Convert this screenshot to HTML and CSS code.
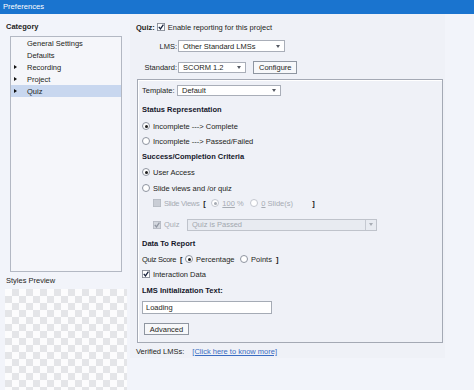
FILE: index.html
```html
<!DOCTYPE html>
<html lang="en">
<head>
    <meta charset="utf-8">
    <title>Preferences</title>
    <link rel="stylesheet" href="styles.css">
</head>

<body>

    <div class="titlebar">Preferences</div>

    <div class="main">
        <div class="side">
            <div class="side-title">Category</div>
            <ul class="tree">
                <li class="tree-item"><span class="arrow"></span>General Settings</li>
                <li class="tree-item"><span class="arrow"></span>Defaults</li>
                <li class="tree-item"><span class="arrow kids"></span>Recording</li>
                <li class="tree-item"><span class="arrow kids"></span>Project</li>
                <li class="tree-item selected"><span class="arrow kids"></span>Quiz</li>
            </ul>
            <div class="preview-title">Styles Preview</div>
            <div class="preview"></div>
        </div>

        <div class="panel">
            <div class="quiz-row">
                <b class="quiz-label">Quiz:</b>
                <svg class="cb" viewBox="0 0 9 9"><rect x=".5" y=".5" width="8" height="8" fill="#fff" stroke="#858b96"/><path d="M2 4.3l1.9 2.3L7.2 1.8" fill="none" stroke="#16213d" stroke-width="1.4"/></svg>
                Enable reporting for this project
            </div>

            <div class="field-row lms-row">
                <span class="field-label">LMS:</span>
                <div class="select lms-select">Other Standard LMSs</div>
            </div>

            <div class="field-row std-row">
                <span class="field-label">Standard:</span>
                <div class="select std-select">SCORM 1.2</div>
                <button class="btn configure">Configure</button>
            </div>

            <div class="group">
                <div class="row template-row">
                    <span class="template-label">Template:</span>
                    <div class="select template-select">Default</div>
                </div>

                <div class="row heading mt6">Status Representation</div>
                <div class="row mt5"><span class="radio on"></span>Incomplete ---&gt; Complete</div>
                <div class="row mt3"><span class="radio"></span>Incomplete ---&gt; Passed/Failed</div>

                <div class="row heading mt3">Success/Completion Criteria</div>
                <div class="row mt4"><span class="radio on"></span>User Access</div>
                <div class="row mt4"><span class="radio"></span>Slide views and /or quiz</div>

                <div class="row sub mt3">
                    <svg class="cb" viewBox="0 0 9 9"><rect x=".5" y=".5" width="8" height="8" fill="#c9cdd5" stroke="#b5bac3"/></svg>
                    <span class="dim slide-views">Slide Views</span>
                    <b class="bracket">[</b>
                    <span class="radio on dis"></span>
                    <span class="dim pct"><u>100</u> %</span>
                    <span class="radio dis"></span>
                    <span class="dim slides"><u>0</u> Slide(s)</span>
                    <b class="bracket">]</b>
                </div>

                <div class="row sub quiz-sub">
                    <svg class="cb" viewBox="0 0 9 9"><rect x=".5" y=".5" width="8" height="8" fill="#d3d7de" stroke="#b5bac3"/><path d="M2 4.3l1.9 2.3L7.2 1.8" fill="none" stroke="#9096a2" stroke-width="1.4"/></svg>
                    <span class="dim quiz-word">Quiz</span>
                    <div class="select disabled quiz-select">Quiz is Passed<span class="drop"></span></div>
                </div>

                <div class="row heading mt6">Data To Report</div>
                <div class="row mt4">
                    <span class="score-label">Quiz Score</span>
                    <b class="bracket">[</b>
                    <span class="radio on"></span>
                    <span class="pct-word">Percentage</span>
                    <span class="radio"></span>
                    <span class="points-word">Points</span>
                    <b class="bracket">]</b>
                </div>
                <div class="row mt3">
                    <svg class="cb" viewBox="0 0 9 9"><rect x=".5" y=".5" width="8" height="8" fill="#fff" stroke="#858b96"/><path d="M2 4.3l1.9 2.3L7.2 1.8" fill="none" stroke="#16213d" stroke-width="1.4"/></svg>
                    Interaction Data
                </div>

                <div class="row heading mt4">LMS Initialization Text:</div>
                <input class="init-text" value="Loading">
                <button class="btn advanced">Advanced</button>
            </div>

            <div class="verified">Verified LMSs:<a href="#" class="more">[Click here to know more]</a></div>
        </div>
    </div>

</body>
</html>
```

FILE: styles.css
```css
body {
    margin: 0;
    font-family: "Liberation Sans", Arial, sans-serif;
    font-size: 7.5px;
    color: #1e1e22;
    background-color: #f2f4fa;
    height: 390px;
    overflow: hidden;
}

.titlebar {
    height: 14px;
    line-height: 14px;
    padding-left: 3px;
    background-color: #1a74cf;
    color: #fff;
    font-size: 7.6px;
}

.main {
    display: flex;
}

/* left column */
.side {
    width: 130px;
    flex: none;
}

.side-title {
    margin-left: 6px;
    padding-top: 8px;
    line-height: 10px;
    font-weight: bold;
}

.tree {
    list-style: none;
    margin: 4px 0 0 10px;
    padding: 0;
    width: 110px;
    height: 234px;
    border: 1px solid #b3b8c3;
    background-color: #f5f6fa;
}

.tree-item {
    display: flex;
    align-items: center;
    height: 12px;
    padding-left: 3px;
}

.tree-item.selected {
    background-color: #c8d7ef;
}

.arrow {
    width: 13px;
    flex: none;
}

.arrow.kids::before {
    content: "";
    display: block;
    width: 0;
    height: 0;
    border-left: 3px solid #111;
    border-top: 2px solid transparent;
    border-bottom: 2px solid transparent;
}

.preview-title {
    margin: 4px 0 0 6px;
    line-height: 10px;
}

.preview {
    margin: 3px 0 0 5px;
    width: 122px;
    height: 101px;
    background: repeating-conic-gradient(#e4e5e8 0 25%, #fcfcfd 0 50%) 0 0 / 14px 14px;
}

/* right panel */
.panel {
    width: 315px;
    height: 344px;
    padding-left: 6px;
    box-sizing: border-box;
    background-color: #eff1f7;
}

.quiz-row {
    display: flex;
    align-items: center;
    margin-top: 8px;
    height: 10px;
    white-space: nowrap;
}

.quiz-label {
    margin-right: 2px;
}

.cb {
    width: 8px;
    height: 8px;
    margin-right: 3px;
    flex: none;
}

.field-row {
    display: flex;
    align-items: center;
}

.lms-row {
    margin-top: 8px;
    height: 12px;
}

.std-row {
    margin-top: 9px;
    height: 13px;
}

.field-label {
    width: 41px;
    text-align: right;
    margin-right: 1px;
}

.select {
    display: flex;
    align-items: center;
    height: 12px;
    box-sizing: border-box;
    border: 1px solid #a9aeb8;
    background-color: #fff;
    padding-left: 4px;
    white-space: nowrap;
}

.select::after {
    content: "";
    margin-left: auto;
    margin-right: 4px;
    border-top: 3px solid #555a63;
    border-left: 2px solid transparent;
    border-right: 2px solid transparent;
}

.lms-select {
    width: 107px;
}

.std-select {
    width: 68px;
    height: 11px;
}

.btn {
    height: 13px;
    padding: 0 5px;
    border: 1px solid #8f96a1;
    border-radius: 0;
    background-color: #f7f8fa;
    font: inherit;
    color: inherit;
}

.configure {
    margin-left: 7px;
    width: 44px;
}

/* group box */
.group {
    margin: 5px 0 0 1px;
    width: 306px;
    height: 264px;
    box-sizing: border-box;
    border: 1px solid #a4a9b4;
    box-shadow: inset 1px 1px 0 #fff;
    padding-left: 4px;
}

.row {
    display: flex;
    align-items: center;
    height: 12px;
    white-space: nowrap;
}

.row > span,
.row > b {
    flex: none;
}

.heading {
    font-weight: bold;
    color: #15172a;
}

.mt3 { margin-top: 3px; }
.mt4 { margin-top: 4px; }
.mt5 { margin-top: 5px; }
.mt6 { margin-top: 6px; }

.template-row {
    margin-top: 4px;
    height: 13px;
}

.template-label {
    width: 35px;
}

.template-select {
    width: 104px;
    height: 11px;
}

.radio {
    display: flex;
    align-items: center;
    justify-content: center;
    width: 8px;
    height: 8px;
    box-sizing: border-box;
    border: 1px solid #8e94a0;
    border-radius: 50%;
    background-color: #fff;
    margin-right: 3px;
}

.radio.on::after {
    content: "";
    width: 3px;
    height: 3px;
    border-radius: 50%;
    background-color: #1f1f1f;
}

.radio.dis {
    border-color: #c3c7cf;
}

.radio.dis::after {
    background-color: #a5aab2;
}

.sub {
    padding-left: 11px;
}

.dim {
    color: #a6abb3;
}

.bracket {
    width: 3px;
    color: #1c1c1c;
    margin-right: 5px;
}

.slide-views,
.score-label {
    letter-spacing: -0.3px;
    margin-right: 4px;
}

.score-label + .bracket {
    margin-right: 2px;
}

.pct {
    width: 28px;
}

.slides {
    width: 51px;
}

.quiz-sub {
    margin-top: 9px;
    height: 13px;
}

.quiz-word {
    width: 23px;
}

.select.disabled {
    width: 190px;
    background-color: #e8ebf1;
    border-color: #bfc3cb;
    color: #a2a7af;
    padding-right: 0;
}

.select.disabled::after {
    display: none;
}

.drop {
    margin-left: auto;
    width: 10px;
    height: 100%;
    border-left: 1px solid #c5c9d1;
    display: flex;
    align-items: center;
    justify-content: center;
}

.drop::before {
    content: "";
    border-top: 3px solid #a8adb5;
    border-left: 2px solid transparent;
    border-right: 2px solid transparent;
}

.pct-word {
    width: 44px;
}

.points-word {
    width: 25px;
}

.init-text {
    display: block;
    margin-top: 5px;
    width: 130px;
    height: 13px;
    box-sizing: border-box;
    border: 1px solid #a5abb5;
    padding: 0 3px;
    font: inherit;
    color: inherit;
    background-color: #fff;
}

.advanced {
    display: block;
    margin: 9px 0 0 2px;
    width: 45px;
    height: 12px;
    padding: 0;
}

.verified {
    margin-top: 4px;
    line-height: 10px;
}

.more {
    margin-left: 8px;
    color: #3a6cc2;
}
```
